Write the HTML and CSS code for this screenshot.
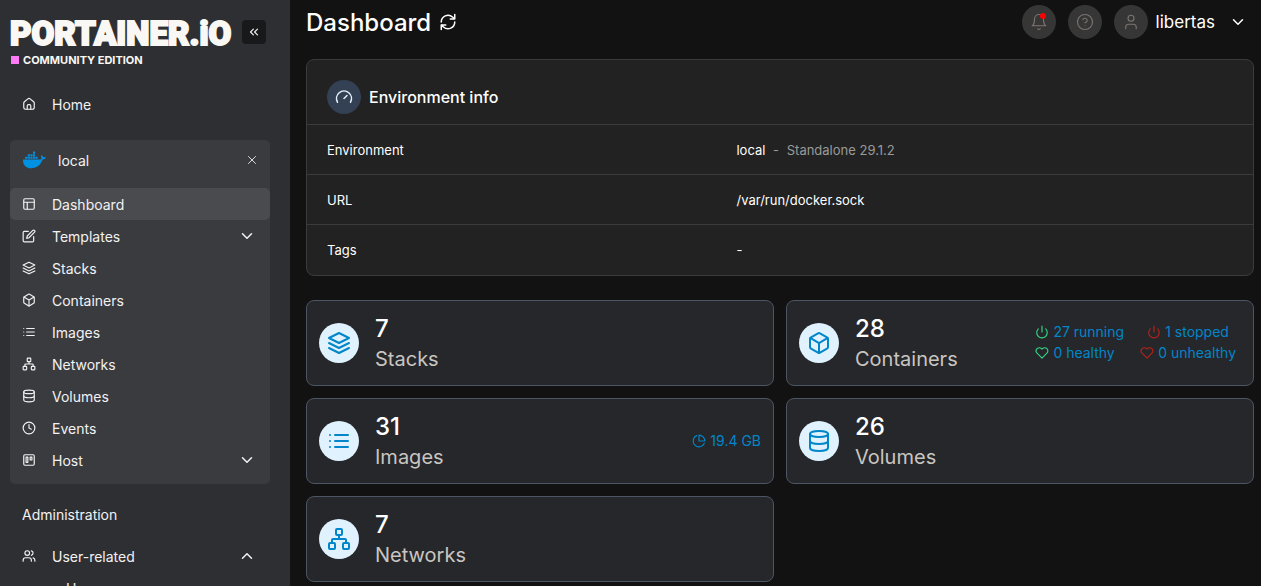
FILE: index.html
```html
<!DOCTYPE html>
<html lang="en">
<head>
  <meta charset="UTF-8">
  <meta name="viewport" content="width=device-width, initial-scale=1.0">
  <title>Portainer</title>
  <link rel="stylesheet" href="styles.css">
</head>
<body>
  <!-- icon sprite -->
  <svg class="sprite" aria-hidden="true">
    <symbol id="i-home" viewBox="0 0 24 24"><path d="M3 10.5a3 3 0 0 1 1.1-2.300l6-5a3 3 0 0 1 3.800 0l6 5a3 3 0 0 1 1.100 2.300V18a3 3 0 0 1-3 3H6a3 3 0 0 1-3-3z"/><path d="M9 21v-6a2 2 0 0 1 2-2h2a2 2 0 0 1 2 2v6"/></symbol>
    <symbol id="i-layout" viewBox="0 0 24 24"><rect x="3" y="3" width="18" height="18" rx="2"/><path d="M3 9h18M9 21V9"/></symbol>
    <symbol id="i-edit" viewBox="0 0 24 24"><path d="M11 4H4a2 2 0 0 0-2 2v14a2 2 0 0 0 2 2h14a2 2 0 0 0 2-2v-7"/><path d="M18.5 2.5a2.12 2.12 0 0 1 3 3L12 15l-4 1 1-4z"/></symbol>
    <symbol id="i-layers" viewBox="0 0 24 24"><path d="M12 2 2 7l10 5 10-5z"/><path d="m2 12 10 5 10-5M2 17l10 5 10-5"/></symbol>
    <symbol id="i-box" viewBox="0 0 24 24"><path d="M21 16V8a2 2 0 0 0-1-1.73l-7-4a2 2 0 0 0-2 0l-7 4A2 2 0 0 0 3 8v8a2 2 0 0 0 1 1.73l7 4a2 2 0 0 0 2 0l7-4A2 2 0 0 0 21 16z"/><path d="M3.27 6.96 12 12.01l8.73-5.05M12 22.08V12"/></symbol>
    <symbol id="i-list" viewBox="0 0 24 24"><path d="M8 6h13M8 12h13M8 18h13M3 6h.01M3 12h.01M3 18h.01"/></symbol>
    <symbol id="i-network" viewBox="0 0 24 24"><rect x="16" y="16" width="6" height="6" rx="1"/><rect x="2" y="16" width="6" height="6" rx="1"/><rect x="9" y="2" width="6" height="6" rx="1"/><path d="M5 16v-3a1 1 0 0 1 1-1h12a1 1 0 0 1 1 1v3M12 12V8"/></symbol>
    <symbol id="i-database" viewBox="0 0 24 24"><ellipse cx="12" cy="5" rx="9" ry="3"/><path d="M21 12c0 1.66-4 3-9 3s-9-1.34-9-3"/><path d="M3 5v14c0 1.66 4 3 9 3s9-1.34 9-3V5"/></symbol>
    <symbol id="i-clock" viewBox="0 0 24 24"><circle cx="12" cy="12" r="10"/><path d="M12 6v6l4 2"/></symbol>
    <symbol id="i-trello" viewBox="0 0 24 24"><rect x="3" y="3" width="18" height="18" rx="2"/><path d="M7 7h3v9H7zM14 7h3v5h-3z"/></symbol>
    <symbol id="i-users" viewBox="0 0 24 24"><path d="M2 21v-2a4 4 0 0 1 4-4h6a4 4 0 0 1 4 4v2"/><circle cx="9" cy="7" r="4"/><path d="M22 21v-2a4 4 0 0 0-3-3.87M16 3.13a4 4 0 0 1 0 7.75"/></symbol>
    <symbol id="i-down" viewBox="0 0 24 24"><path d="m6 9 6 6 6-6"/></symbol>
    <symbol id="i-up" viewBox="0 0 24 24"><path d="m18 15-6-6-6 6"/></symbol>
    <symbol id="i-collapse" viewBox="0 0 24 24"><path d="m11 17-5-5 5-5M18 17l-5-5 5-5"/></symbol>
    <symbol id="i-x" viewBox="0 0 24 24"><path d="M18 6 6 18M6 6l12 12"/></symbol>
    <symbol id="i-refresh" viewBox="0 0 24 24"><path d="M21 2v6h-6M3 12a9 9 0 0 1 15-6.7L21 8M3 22v-6h6M21 12a9 9 0 0 1-15 6.7L3 16"/></symbol>
    <symbol id="i-gauge" viewBox="0 0 24 24"><path d="m12 14 4-4M3.34 19a10 10 0 1 1 17.32 0"/></symbol>
    <symbol id="i-bell" viewBox="0 0 24 24"><path d="M6 8a6 6 0 0 1 12 0c0 7 3 9 3 9H3s3-2 3-9M10.3 21a1.94 1.94 0 0 0 3.4 0"/></symbol>
    <symbol id="i-help" viewBox="0 0 24 24"><circle cx="12" cy="12" r="10"/><path d="M9.09 9a3 3 0 0 1 5.83 1c0 2-3 3-3 3M12 17h.01"/></symbol>
    <symbol id="i-user" viewBox="0 0 24 24"><path d="M19 21v-2a4 4 0 0 0-4-4H9a4 4 0 0 0-4 4v2"/><circle cx="12" cy="7" r="4"/></symbol>
    <symbol id="i-power" viewBox="0 0 24 24"><path d="M18.36 6.64a9 9 0 1 1-12.73 0M12 2v10"/></symbol>
    <symbol id="i-heart" viewBox="0 0 24 24"><path d="M20.42 4.58a5.4 5.4 0 0 0-7.65 0L12 5.36l-.77-.78a5.4 5.4 0 0 0-7.65 7.65L12 20.65l8.42-8.42a5.4 5.4 0 0 0 0-7.65z"/></symbol>
    <symbol id="i-pie" viewBox="0 0 24 24"><path d="M21.21 15.89A10 10 0 1 1 8 2.83"/><path d="M22 12A10 10 0 0 0 12 2v10z"/></symbol>
    <symbol id="i-docker" viewBox="0 0 24 18"><path d="M0 8.4h17.6c1-.1 1.7-.4 2-.8-.9-1-1.1-2.6-.2-3.9.9.6 1.5 1.4 1.6 2.3 1-.2 2.1-.1 3 .5-.6 1.3-1.9 1.9-3.6 1.9C18.7 13.8 14.6 17.5 8.6 17.5 2.8 17.500-.2 13.800 0 8.400z"/><path d="M2.300 5.600h2.200v2.200H2.300zM5 5.600h2.200v2.200H5zM7.700 5.600h2.200v2.200H7.700zM10.400 5.600h2.200v2.200h-2.200zM13.100 5.600h2.200v2.200h-2.200zM5 2.900h2.200v2.200H5zM7.700 2.900h2.200v2.200H7.700zM10.400 2.900h2.200v2.200h-2.200zM10.400.2h2.200v2.200h-2.200z"/></symbol>
  </svg>

  <nav class="sidebar">
    <div class="sidebar-head">
      <a class="logo" href="#">
        <span class="logo-name">PORTAINER.iO</span>
        <span class="logo-edition">COMMUNITY EDITION</span>
      </a>
      <button class="collapse-btn" aria-label="Collapse sidebar"><svg class="icon"><use href="#i-collapse"/></svg></button>
    </div>

    <a class="nav-item" href="#"><svg class="icon"><use href="#i-home"/></svg>Home</a>

    <div class="env-group">
      <div class="env-head">
        <svg class="docker"><use href="#i-docker"/></svg>
        <span>local</span>
        <button class="close-btn" aria-label="Close environment"><svg class="icon"><use href="#i-x"/></svg></button>
      </div>
      <a class="nav-item active" href="#"><svg class="icon"><use href="#i-layout"/></svg>Dashboard</a>
      <a class="nav-item" href="#"><svg class="icon"><use href="#i-edit"/></svg>Templates<svg class="icon chevron"><use href="#i-down"/></svg></a>
      <a class="nav-item" href="#"><svg class="icon"><use href="#i-layers"/></svg>Stacks</a>
      <a class="nav-item" href="#"><svg class="icon"><use href="#i-box"/></svg>Containers</a>
      <a class="nav-item" href="#"><svg class="icon"><use href="#i-list"/></svg>Images</a>
      <a class="nav-item" href="#"><svg class="icon"><use href="#i-network"/></svg>Networks</a>
      <a class="nav-item" href="#"><svg class="icon"><use href="#i-database"/></svg>Volumes</a>
      <a class="nav-item" href="#"><svg class="icon"><use href="#i-clock"/></svg>Events</a>
      <a class="nav-item" href="#"><svg class="icon"><use href="#i-trello"/></svg>Host<svg class="icon chevron"><use href="#i-down"/></svg></a>
    </div>

    <div class="nav-title">Administration</div>
    <a class="nav-item" href="#"><svg class="icon"><use href="#i-users"/></svg>User-related<svg class="icon chevron"><use href="#i-up"/></svg></a>
    <a class="nav-item nav-sub" href="#">Users</a>
  </nav>

  <main class="content">
    <header class="page-header">
      <h1>Dashboard</h1>
      <button class="refresh-btn" aria-label="Refresh"><svg class="icon"><use href="#i-refresh"/></svg></button>
      <div class="header-actions">
        <button class="round-btn" aria-label="Notifications"><svg class="icon"><use href="#i-bell"/></svg><span class="dot"></span></button>
        <button class="round-btn" aria-label="Help"><svg class="icon"><use href="#i-help"/></svg></button>
        <button class="user-menu">
          <span class="round-btn"><svg class="icon"><use href="#i-user"/></svg></span>
          <span class="user-name">libertas</span>
          <svg class="icon chevron"><use href="#i-down"/></svg>
        </button>
      </div>
    </header>

    <section class="widget">
      <div class="widget-head">
        <span class="widget-icon"><svg class="icon"><use href="#i-gauge"/></svg></span>
        <h2>Environment info</h2>
      </div>
      <table class="info-table">
        <tr><th scope="row">Environment</th><td>local <span class="muted">- <span class="engine">Standalone 29.1.2</span></span></td></tr>
        <tr><th scope="row">URL</th><td>/var/run/docker.sock</td></tr>
        <tr><th scope="row">Tags</th><td>-</td></tr>
      </table>
    </section>

    <section class="cards">
      <a class="card" href="#">
        <span class="card-icon"><svg class="icon"><use href="#i-layers"/></svg></span>
        <div class="card-text"><div class="card-count">7</div><div class="card-label">Stacks</div></div>
      </a>
      <a class="card" href="#">
        <span class="card-icon"><svg class="icon"><use href="#i-box"/></svg></span>
        <div class="card-text"><div class="card-count">28</div><div class="card-label">Containers</div></div>
        <div class="card-status">
          <span class="stat"><svg class="icon ok"><use href="#i-power"/></svg>27 running</span>
          <span class="stat"><svg class="icon bad"><use href="#i-power"/></svg>1 stopped</span>
          <span class="stat"><svg class="icon ok"><use href="#i-heart"/></svg>0 healthy</span>
          <span class="stat"><svg class="icon bad"><use href="#i-heart"/></svg>0 unhealthy</span>
        </div>
      </a>
      <a class="card" href="#">
        <span class="card-icon"><svg class="icon"><use href="#i-list"/></svg></span>
        <div class="card-text"><div class="card-count">31</div><div class="card-label">Images</div></div>
        <span class="stat card-size"><svg class="icon"><use href="#i-pie"/></svg>19.4 GB</span>
      </a>
      <a class="card" href="#">
        <span class="card-icon"><svg class="icon"><use href="#i-database"/></svg></span>
        <div class="card-text"><div class="card-count">26</div><div class="card-label">Volumes</div></div>
      </a>
      <a class="card" href="#">
        <span class="card-icon"><svg class="icon"><use href="#i-network"/></svg></span>
        <div class="card-text"><div class="card-count">7</div><div class="card-label">Networks</div></div>
      </a>
    </section>
  </main>
</body>
</html>
```
FILE: styles.css
```css
* { box-sizing: border-box; margin: 0; padding: 0; }
body {
  background: #121212;
  color: #fff;
  font-family: Inter, 'Liberation Sans', sans-serif;
  font-size: 14px;
  display: flex;
  min-height: 100vh;
}
a { color: inherit; text-decoration: none; }
button { background: none; border: none; color: inherit; font: inherit; cursor: pointer; }
.sprite { display: none; }
.icon {
  width: 14px;
  height: 14px;
  flex: none;
  fill: none;
  stroke: currentColor;
  stroke-width: 2;
  stroke-linecap: round;
  stroke-linejoin: round;
}
.icon.chevron { width: 18px; height: 18px; }

/* sidebar */
.sidebar {
  width: 290px;
  flex: none;
  height: 100vh;
  position: sticky;
  top: 0;
  overflow-y: auto;
  scrollbar-width: none;
  padding: 16px 20px 0 10px;
  background: #2e2f33;
  color: #f2f2f2;
}
.sidebar-head {
  display: flex;
  justify-content: space-between;
  align-items: flex-start;
  height: 72px;
  padding-right: 4px;
}
.logo { color: #f9f8f4; }
.logo-name {
  display: block;
  font-family: Roboto, sans-serif;
  font-size: 33px;
  font-weight: 900;
  line-height: 36px;
  -webkit-text-stroke: 2px #f9f8f4;
}
.logo-edition {
  display: flex;
  align-items: center;
  gap: 4px;
  font-size: 11px;
  font-weight: 700;
  line-height: 16px;
}
.logo-edition::before {
  content: "";
  width: 8px;
  height: 8px;
  margin-left: 1px;
  background: #ff7bf5;
}
.collapse-btn {
  display: flex;
  align-items: center;
  justify-content: center;
  width: 24px;
  height: 24px;
  margin-top: 4px;
  border-radius: 4px;
  background: #18191b;
}
.nav-item {
  display: flex;
  align-items: center;
  height: 32px;
  padding: 0 14px 0 12px;
  gap: 16px;
  border-radius: 5px;
}
.nav-item.active { background: #4a4b4f; }
.nav-item .chevron { margin-left: auto; }
.env-group {
  margin-top: 20px;
  padding-bottom: 8px;
  border-radius: 5px;
  background: #3a3b3f;
}
.env-head {
  display: flex;
  align-items: center;
  gap: 12px;
  height: 40px;
  margin-bottom: 8px;
  padding: 0 11px 0 13px;
}
.docker { width: 23px; height: 18px; fill: #0091e2; }
.close-btn { display: flex; margin-left: auto; }
.close-btn .icon { stroke-width: 1.5; }
.nav-title { padding: 21px 12px 15px; line-height: 20px; }
.nav-sub { padding-left: 56px; }

/* page header */
.content { flex: 1; min-width: 0; padding: 4px 7px 4px 16px; }
.page-header { display: flex; align-items: center; gap: 8px; height: 36px; }
h1 { font-size: 24px; font-weight: 500; }
.refresh-btn { display: flex; }
.refresh-btn .icon { width: 18px; height: 18px; }
.header-actions { display: flex; align-items: center; gap: 12px; margin-left: auto; padding-right: 7px; }
.round-btn {
  display: flex;
  align-items: center;
  justify-content: center;
  position: relative;
  width: 34px;
  height: 34px;
  border-radius: 50%;
  background: #363636;
  color: #7d7470;
}
.round-btn .icon { width: 18px; height: 18px; stroke-width: 1.5; }
.dot {
  position: absolute;
  top: 8px;
  right: 10px;
  width: 6px;
  height: 6px;
  border-radius: 50%;
  background: #f00;
}
.user-menu { display: flex; align-items: center; gap: 8px; }
.user-name { font-size: 17px; margin-right: 6px; }

/* environment info */
.widget {
  margin-top: 19px;
  border: 1px solid #3b3b3b;
  border-radius: 8px;
  background: #222;
}
.widget-head { display: flex; align-items: center; gap: 8px; padding: 20px 20px 10px; }
.widget-icon {
  display: flex;
  align-items: center;
  justify-content: center;
  width: 34px;
  height: 34px;
  border-radius: 50%;
  background: #344054;
  color: #e0f2fe;
}
.widget-icon .icon { width: 18px; height: 18px; }
h2 { font-size: 16px; font-weight: 500; }
.info-table { width: 100%; border-collapse: collapse; font-size: 13px; text-align: left; }
.info-table th, .info-table td { height: 50px; border-top: 1px solid #3b3b3b; font-weight: 400; }
.info-table th { width: 45.4%; padding-left: 20px; }
.muted { margin-left: 4px; color: #9a9a9a; }
.engine { margin-left: 4px; }

/* resource cards */
.cards {
  display: grid;
  grid-template-columns: 1fr 1fr;
  gap: 12px;
  margin-top: 24px;
}
.card {
  display: flex;
  align-items: center;
  gap: 16px;
  height: 86px;
  padding: 0 12px;
  border: 1px solid #4b5563;
  border-radius: 8px;
  background: #26272b;
}
.card-icon {
  display: flex;
  align-items: center;
  justify-content: center;
  width: 40px;
  height: 40px;
  border-radius: 50%;
  background: #e0f2fe;
  color: #0086c9;
}
.card-icon .icon { width: 24px; height: 24px; }
.card-text { padding-top: 2px; }
.card-count { font-size: 24px; font-weight: 500; line-height: 30px; }
.card-label { font-size: 20px; line-height: 30px; color: #c9c5c0; }
.card-status {
  display: grid;
  grid-template-columns: auto auto;
  gap: 1px 16px;
  margin-left: auto;
  padding-right: 5px;
}
.card-status .stat:nth-child(even) { justify-content: center; }
.stat { display: flex; align-items: center; gap: 4px; line-height: 20px; color: #0086c9; }
.card-size { margin-left: auto; }
.ok { color: #32d583; }
.bad { color: #b42318; }
```
